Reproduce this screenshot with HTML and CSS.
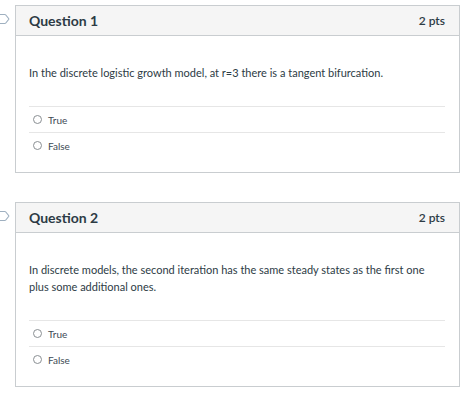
FILE: index.html
```html
<!DOCTYPE html>
<html>
<head>
<meta charset="utf-8">
<link rel="stylesheet" href="styles.css">
</head>
<body>
<div class="quiz">
  <div class="question">
    <div class="flag">
      <svg width="10" height="12" viewBox="0 0 10 12"><path d="M-3 1.5 H4.8 Q5.4 1.5 5.8 2 L8.6 5.5 Q8.9 6 8.6 6.5 L5.8 10 Q5.4 10.5 4.8 10.5 H-3" fill="none" stroke="#9fb0c0" stroke-width="1.2"/></svg>
    </div>
    <div class="card">
      <div class="card-header">
        <span class="q-title">Question 1</span>
        <span class="q-pts">2 pts</span>
      </div>
      <div class="card-body">
        <p class="q-text">In the discrete logistic growth model, at r=3 there is a tangent bifurcation.</p>
        <div class="answers">
          <label class="answer"><span class="radio"></span>True</label>
          <label class="answer"><span class="radio"></span>False</label>
        </div>
      </div>
    </div>
  </div>
  <div class="question">
    <div class="flag">
      <svg width="10" height="12" viewBox="0 0 10 12"><path d="M-3 1.5 H4.8 Q5.4 1.5 5.8 2 L8.6 5.5 Q8.9 6 8.6 6.5 L5.8 10 Q5.4 10.5 4.8 10.5 H-3" fill="none" stroke="#9fb0c0" stroke-width="1.2"/></svg>
    </div>
    <div class="card">
      <div class="card-header">
        <span class="q-title">Question 2</span>
        <span class="q-pts">2 pts</span>
      </div>
      <div class="card-body">
        <p class="q-text">In discrete models, the second iteration has the same steady states as the first one plus some additional ones.</p>
        <div class="answers">
          <label class="answer"><span class="radio"></span>True</label>
          <label class="answer"><span class="radio"></span>False</label>
        </div>
      </div>
    </div>
  </div>
</div>
</body>
</html>
```
FILE: styles.css
```css
* { box-sizing: border-box; }
body {
  margin: 0;
  background: #fff;
  font-family: Lato, "Liberation Sans", sans-serif;
  color: #2d3b45;
}
.quiz {
  padding-top: 5px;
  display: flex;
  flex-direction: column;
  gap: 29px;
  width: 460px;
}
.question {
  display: flex;
}
.flag {
  width: 15px;
  flex: none;
  padding-top: 8px;
}
.flag svg { display: block; }
.card {
  width: 445px;
  border: 1px solid #c9cdd0;
}
.card-header {
  height: 30px;
  background: #f5f5f5;
  border-bottom: 1px solid #c9cdd0;
  display: flex;
  align-items: center;
  justify-content: space-between;
  padding: 0 14px 0 13px;
}
.q-title {
  font-weight: 700;
  font-size: 14px;
  color: #2d3b45;
}
.q-pts {
  font-size: 12px;
  font-weight: 600;
  color: #2d3b45;
}
.card-body {
  padding: 28px 14px 14px 13px;
}
.q-text {
  margin: 0 0 25px;
  font-size: 11px;
  line-height: 17px;
}
.answer {
  display: flex;
  align-items: center;
  height: 26px;
  border-top: 1px solid #e6e6e6;
  font-size: 10px;
  color: #3d4a54;
  padding-left: 4px;
}
.radio {
  width: 9px;
  height: 9px;
  border: 1px solid #8a8f93;
  border-radius: 50%;
  margin-right: 6px;
  background: #fff;
}
```
